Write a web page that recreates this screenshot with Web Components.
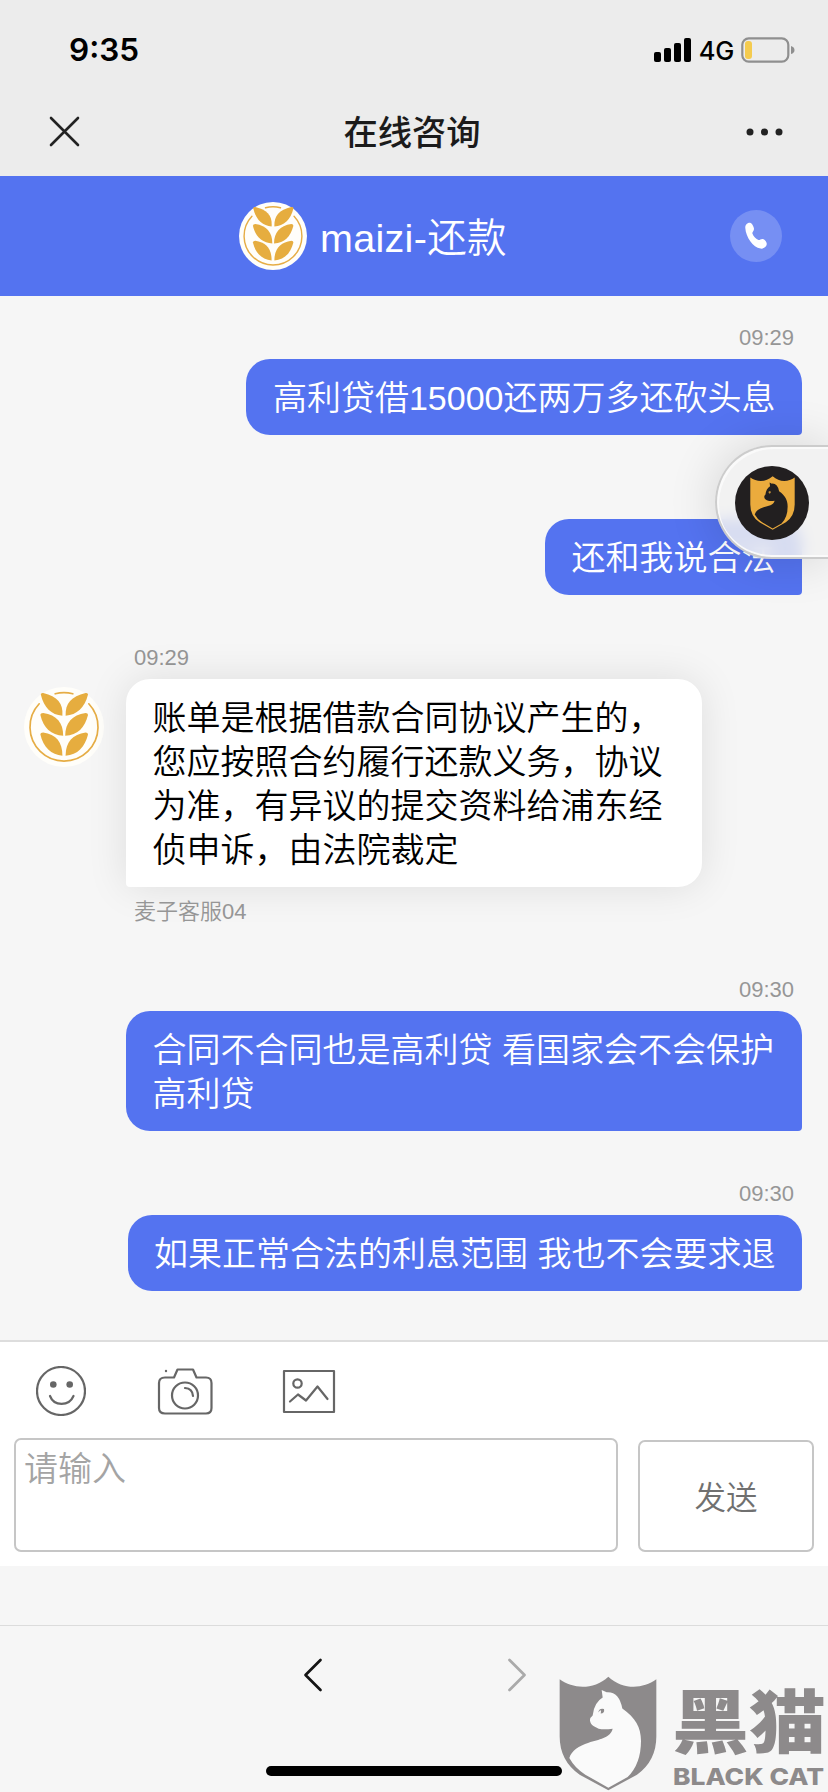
<!DOCTYPE html>
<html lang="zh-CN">
<head>
<meta charset="utf-8">
<title>在线咨询</title>
<style>
body{margin:0;background:#f6f6f6;font-family:"Liberation Sans","Noto Sans CJK SC",sans-serif}
</style>
</head>
<body>
<chat-page></chat-page>
<script>
const define=(name,html)=>{
  const t=document.createElement('template');
  t.innerHTML=html;
  customElements.define(name,class extends HTMLElement{
    constructor(){super();this.attachShadow({mode:'open'}).appendChild(t.content.cloneNode(true));}
  });
};

define('wheat-logo',`
<style>:host{display:block;width:80px;height:80px;flex:none}svg{display:block;width:100%;height:100%}</style>
<svg viewBox="-50 -50 100 100">
  <circle r="50" fill="#fffefa"/>
  <g fill="none" stroke="#e6ad45" stroke-width="2.1" stroke-linecap="round">
    <path d="M-31 -29A42.5 42.5 0 1 0 31 -29"/><path d="M-11 -41.5Q0 -44.5 11 -41.5"/>
  </g>
  <g fill="#e6ad3f">
    <path d="M-29 -40.500Q-29 -43 -26 -42.500C-8 -38 -1 -30 -2 -14C-16 -15 -25 -24 -29 -40.500Z"/>
    <path d="M-29.500 -15Q-29.500 -17.500 -26 -17.500C-9 -15 -1 -5 -1 11C-16 10 -26 1 -29.500 -15Z"/>
    <path d="M-29.500 9.500Q-29.500 7 -26 7C-10 9 -2 19 -2 36C-16 35 -26 25 -29.500 9.500Z"/>
    <path d="M30 -40.500Q30 -43 27 -42.500C9 -38 1.500 -30 2 -14C16 -15 26 -24 30 -40.500Z"/>
    <path d="M30 -15Q30 -17.500 27 -17.500C10 -15 1.500 -5 1.500 11C17 10 26 1 30 -15Z"/>
    <path d="M30 9.500Q30 7 27 7C11 9 2 19 2 36C17 35 26 25 30 9.500Z"/>
  </g>
</svg>`);

define('cat-shield',`
<style>:host{display:block}svg{display:block;width:100%;height:100%}</style>
<svg viewBox="56 50 294 346" preserveAspectRatio="none">
  <path fill="var(--shield)" d="M58 60C100 90 160 92 204 52C248 92 306 90 348 60V232Q348 305 290 347L204 394L118 347Q58 305 58 232Z"/>
  <path fill="var(--cat)" d="M184 92L199 99Q236 96 246 148C285 175 302 205 302 245Q302 315 262 354L204 386L135 347Q104 328 87 297C94 274 115 261 145 251C175 241 210 238 217 209Q190 212 175 209C164 203 150 198 149 184Q148 176 157 169Q161 130 187 115Z"/>
  <path fill="var(--shield)" d="M174 160Q175 146 191 149Q194 162 181 163Q184 155 180 152Z"/>
</svg>`);

define('status-bar',`
<style>
:host{display:flex;height:88px;box-sizing:border-box;padding:34px 33px 0 69px;justify-content:space-between;align-items:flex-start;font-family:Inter,sans-serif;color:#000}
b{font-size:31.5px;line-height:32px;font-weight:600}
.r{display:flex;align-items:center;height:32px}
span{font-size:25.5px;font-weight:500;margin:0 7px 0 7px;letter-spacing:-.3px}
svg{display:block}
</style>
<b>9:35</b>
<div class="r">
 <svg width="38" height="24"><rect y="14" width="7" height="10" rx="2"/><rect x="10" y="10" width="7" height="14" rx="2"/><rect x="20" y="5" width="7" height="19" rx="2"/><rect x="30" width="7" height="24" rx="2"/></svg>
 <span>4G</span>
 <svg width="54" height="26"><rect x="1.300" y="1.300" width="46" height="23.400" rx="6.500" fill="none" stroke="#8f8f8f" stroke-width="2.200"/><rect x="4" y="4" width="7" height="18" rx="3" fill="#f4cb4f"/><path d="M50 9Q53.500 10 53.500 13Q53.500 16 50 17Z" fill="#8f8f8f"/></svg>
</div>`);

define('nav-bar',`
<style>
:host{display:flex;height:88px;align-items:center;justify-content:space-between;padding:0 44px 0 49px;font-size:34.300px;font-weight:500;color:#1b1b1b}
svg{display:block}
div{margin:-4px 5px 0 0}
</style>
<svg width="34" height="32" viewBox="0 0 34 32" fill="none" stroke="#222" stroke-width="2.600" stroke-linecap="round"><path d="M2 2L29 29M29 2L2 29"/></svg>
<div><slot></slot></div>
<svg width="38" height="8" viewBox="0 0 38 8" fill="#222"><circle cx="4" cy="4" r="3.500"/><circle cx="18.500" cy="4" r="3.500"/><circle cx="33" cy="4" r="3.500"/></svg>`);

define('service-header',`
<style>
:host{display:flex;justify-content:space-between;align-items:center;box-sizing:border-box;height:120px;padding:0 46px 0 239px;background:#5473f0;color:#fff;font-size:39.500px;font-weight:350}
.mid{display:flex;align-items:center;gap:13px;white-space:nowrap}
.name{margin-top:-4px;letter-spacing:.3px}
wheat-logo{width:68px;height:68px}
.call{width:52px;height:52px;border-radius:50%;background:#768ff3}
svg{display:block}
</style>
<div class="mid"><wheat-logo></wheat-logo><div class="name"><slot></slot></div></div>
<div class="call"><svg width="52" height="52" viewBox="0 0 52 52"><path fill="#fff" d="M15.300 18C15 15 17.500 12.700 20 12.800C22 13 24 17 24 19C24 21 22 22 22.400 23.500C23.500 26.500 26 29 28.500 30C30 30.200 31 28.500 33 29C35 29.500 36.700 32 36.800 34C36.500 37 33.500 39 30.500 38.600C23 37.500 15.800 27 15.300 18Z"/></svg></div>`);

define('chat-message',`
<style>
:host{display:flex;flex-direction:column;align-items:flex-end;margin-right:26px}
.t,.n{font-size:22px;line-height:24px;color:#969696;font-weight:350}
.t{margin:1px 8px 9px}
.b{box-sizing:border-box;padding:17px 26.500px 15px;border-radius:24px 24px 4px 24px;background:#5473f0;color:#fff;font-size:34px;line-height:44px;font-weight:350;white-space:nowrap}
.n{display:none;margin:13px 8px 0}
wheat-logo{display:none}
:host([wide]) .b{width:676px}
:host([plain]) .t{display:none}
:host([from=agent]){display:grid;grid-template-columns:80px auto;column-gap:22px;justify-content:start;justify-items:start;align-items:start;margin:0 0 0 24px}
:host([from=agent]) wheat-logo{display:block;grid-area:2/1;margin-top:8px}
:host([from=agent]) .t{grid-area:1/2}
:host([from=agent]) .b{grid-area:2/2;width:576px;background:#fff;color:#000;border-radius:24px 24px 24px 4px;box-shadow:0 0 40px rgba(0,0,0,.1)}
:host([from=agent]) .n{display:block;grid-area:3/2}
</style>
<wheat-logo></wheat-logo>
<div class="t"><slot name="time"></slot></div>
<div class="b"><slot></slot></div>
<div class="n"><slot name="name"></slot></div>`);

define('message-composer',`
<style>
:host{display:block;box-sizing:border-box;height:226px;border-top:2px solid #ddd;background:#fff}
.tools{display:flex;align-items:center;box-sizing:border-box;height:96px;padding:1px 0 0 36px}
svg{display:block;fill:none;stroke:#666;stroke-width:2.200;stroke-linecap:round;stroke-linejoin:round}
.row{display:flex;align-items:flex-end;gap:20px;padding:0 14px}
.box{box-sizing:border-box;border:2px solid #c6c6c6;border-radius:7px;font-weight:350}
.in{width:604px;height:114px;padding:5px 8px;font-size:34px;line-height:48px;color:#a4a4a4}
.send{display:flex;align-items:center;justify-content:center;width:176px;height:112px;padding-top:4px;font-size:31.500px;line-height:48px;color:#707070}
</style>
<div class="tools">
 <svg width="50" height="50" viewBox="0 0 50 50"><circle cx="25" cy="25" r="24"/><path d="M14 30C18 40.500 33 40.500 37.500 30"/><g fill="#666" stroke="none"><circle cx="17.300" cy="18.500" r="3.300"/><circle cx="33.700" cy="18.500" r="3.300"/></g></svg>
 <svg style="margin-left:71px" width="56" height="50" viewBox="0 0 56 50"><path d="M2 17Q2 11.500 8 11.500H17L20.500 3.500H36L39.500 11.500H49Q54.500 11.500 54.500 17V42Q54.500 47.500 49 47.500H8Q2 47.500 2 42Z"/><circle cx="28" cy="29.500" r="13"/><path d="M28 22Q35.500 22.500 36 30"/><circle cx="9" cy="5" r="1.200" fill="#666" stroke="none"/></svg>
 <svg style="margin-left:69px" width="54" height="50" viewBox="0 0 54 50"><rect x="2" y="5" width="50" height="41"/><circle cx="15.500" cy="17.500" r="4.200"/><path d="M8 35.500L16 28.500L24 34.500L35.500 20.500L45.500 33"/></svg>
</div>
<div class="row"><div class="box in">请输入</div><div class="box send">发送</div></div>`);

define('browser-footer',`
<style>
:host{display:block;margin-top:59px;height:167px;box-sizing:border-box;border-top:1px solid #dcdcdc}
.a{display:flex;gap:184px;padding:32px 0 0 303px}
svg{display:block;fill:none;stroke-width:2.700;stroke-linecap:round;stroke-linejoin:round}
.h{width:296px;height:10px;border-radius:5px;background:#000;margin:74px auto 0}
</style>
<div class="a"><svg width="20" height="34" stroke="#151515"><path d="M17.500 2L2.500 17L17.500 32"/></svg><svg width="20" height="34" stroke="#aaa"><path d="M2.500 2L17.500 17L2.500 32"/></svg></div>
<div class="h"></div>`);

define('float-badge',`
<style>
:host{position:absolute;left:715px;top:445px;width:113px;height:114px;box-sizing:border-box;border:2px solid rgba(200,200,200,.9);border-right:0;border-radius:57px 0 0 57px;background:rgba(241,241,241,.84);backdrop-filter:blur(7px);box-shadow:inset 2px 2px 0 #fafafa,inset 0 -2px 0 #fafafa,0 0 50px rgba(0,0,0,.14)}
.c{width:74px;height:74px;border-radius:50%;background:#221f20;margin:19px 0 0 18px;display:flex;justify-content:center}
cat-shield{width:45px;height:54px;margin-top:10px;--shield:#ebab3d;--cat:#221f20}
</style>
<div class="c"><cat-shield></cat-shield></div>`);

define('brand-watermark',`
<style>
:host{position:absolute;left:559px;top:1676px;width:269px;height:116px;display:flex;gap:16px}
cat-shield{width:98px;height:115px;--shield:#8d8a8b;--cat:#fafafa}
svg{display:block;flex:1;overflow:visible}
text{fill:#8d8a8b}
</style>
<cat-shield></cat-shield>
<svg width="155" height="116" viewBox="0 0 155 116">
<text x="-1" y="72" textLength="154" lengthAdjust="spacingAndGlyphs" font-family="Noto Sans CJK SC" font-weight="900" font-size="69">黑猫</text>
<text x="0" y="108.500" textLength="151" lengthAdjust="spacingAndGlyphs" font-family="Inter,sans-serif" font-weight="800" font-size="23">BLACK CAT</text>
</svg>`);

define('chat-page',`
<style>
:host{display:flex;flex-direction:column;position:relative;width:828px;height:1792px;overflow:hidden;background:#f6f6f6}
.top{background:#ececec}
.list{height:1044px;display:flex;flex-direction:column;box-sizing:border-box;padding-top:29px}
</style>
<div class="top"><status-bar></status-bar><nav-bar>在线咨询</nav-bar></div>
<service-header>maizi-还款</service-header>
<div class="list">
 <chat-message><span slot="time">09:29</span>高利贷借15000还两万多还砍头息</chat-message>
 <chat-message plain style="margin-top:84px">还和我说合法</chat-message>
 <chat-message from="agent" style="margin-top:50px"><span slot="time">09:29</span>账单是根据借款合同协议产生的，<br>您应按照合约履行还款义务，协议<br>为准，有异议的提交资料给浦东经<br>侦申诉，由法院裁定<span slot="name">麦子客服04</span></chat-message>
 <chat-message wide style="margin-top:53px"><span slot="time">09:30</span>合同不合同也是高利贷 看国家会不会保护<br>高利贷</chat-message>
 <chat-message style="margin-top:50px"><span slot="time">09:30</span>如果正常合法的利息范围 我也不会要求退</chat-message>
</div>
<message-composer></message-composer>
<browser-footer></browser-footer>
<float-badge></float-badge>
<brand-watermark></brand-watermark>`);
</script>
</body>
</html>
